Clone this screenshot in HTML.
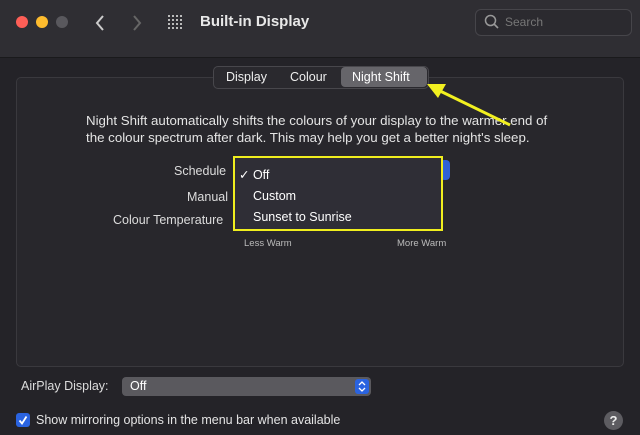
<!DOCTYPE html><html><head><style>
body{margin:0;width:640px;height:435px;background:#242328;font-family:"Liberation Sans",sans-serif;color:#dcdcdc;position:relative;overflow:hidden}
.a{position:absolute}
.tb{left:0;top:0;width:640px;height:57px;background:#2f2e33;border-bottom:1px solid #1a1a1c}
.dot{width:12px;height:12px;border-radius:50%;top:16px}
</style></head><body>
<div class="a tb"></div>
<div class="a dot" style="left:16px;background:#fe5f57"></div>
<div class="a dot" style="left:36px;background:#febc2e"></div>
<div class="a dot" style="left:56px;background:#59585d"></div>
<svg class="a" style="left:92px;top:12px" width="60" height="22"><path d="M11 4 L5 11 L11 18" stroke="#ccc" stroke-width="2" fill="none"/><path d="M42 4 L48 11 L42 18" stroke="#666" stroke-width="2" fill="none"/></svg>
<svg class="a" style="left:168px;top:15px" width="18" height="16" fill="#bbb"><g id="r"><rect x="0" y="0" width="2" height="2"/><rect x="4" y="0" width="2" height="2"/><rect x="8" y="0" width="2" height="2"/><rect x="12" y="0" width="2" height="2"/></g><use href="#r" y="4"/><use href="#r" y="8"/><use href="#r" y="12"/></svg>
<div class="a" style="left:200px;top:13px;font-size:15px;font-weight:bold;color:#e8e8e8">Built-in Display</div>
<div class="a" style="left:475px;top:9px;width:155px;height:25px;border:1px solid #46454a;border-radius:6px;background:#2b2a2f"></div>
<svg class="a" style="left:484px;top:14px" width="16" height="16"><circle cx="6.5" cy="6.5" r="5" stroke="#999" stroke-width="1.5" fill="none"/><path d="M10 10 L14 14" stroke="#999" stroke-width="1.6"/></svg>
<div class="a" style="left:505px;top:15px;font-size:12px;color:#777">Search</div>
<div class="a" style="left:16px;top:77px;width:606px;height:288px;border:1px solid #3a393e;border-radius:5px;background:#28272c"></div>
<div class="a" style="left:213px;top:66px;width:214px;height:21px;border:1px solid #48474c;border-radius:5px;background:#2a292e"></div>
<div class="a" style="left:341px;top:67px;width:86px;height:20px;border-radius:4px;background:#66656a"></div>
<div class="a" style="left:226px;top:70px;font-size:12.5px;color:#eee">Display</div>
<div class="a" style="left:290px;top:70px;font-size:12.5px;color:#eee">Colour</div>
<div class="a" style="left:352px;top:70px;font-size:12.5px;color:#fff">Night Shift</div>
<div class="a" style="left:86px;top:112px;font-size:13.3px;line-height:17px;color:#e4e4e4;white-space:nowrap">Night Shift automatically shifts the colours of your display to the warmer end of<br>the colour spectrum after dark. This may help you get a better night's sleep.</div>
<svg class="a" style="left:0;top:0" width="640" height="435"><path d="M510 125 L436 89" stroke="#f2f020" stroke-width="3"/><path d="M427 84 L446 84 L438 98 Z" fill="#f2f020"/></svg>
<div class="a" style="left:174px;top:164px;font-size:12.5px">Schedule</div>
<div class="a" style="left:187px;top:190px;font-size:12.5px">Manual</div>
<div class="a" style="left:113px;top:213px;font-size:12.5px">Colour Temperature</div>
<div class="a" style="left:244px;top:238px;font-size:9.5px;color:#bbb">Less Warm</div>
<div class="a" style="left:397px;top:238px;font-size:9.5px;color:#bbb">More Warm</div>
<div class="a" style="left:440px;top:160px;width:10px;height:20px;background:#2e62d6;border-radius:4px"></div>
<div class="a" style="left:233px;top:156px;width:206px;height:71px;border:2px solid #f0ee1e;background:#2f2e36"></div>
<div class="a" style="left:239px;top:167px;font-size:12.5px;color:#fff">✓ Off</div>
<div class="a" style="left:253px;top:189px;font-size:12.5px;color:#fff">Custom</div>
<div class="a" style="left:253px;top:210px;font-size:12.5px;color:#fff">Sunset to Sunrise</div>
<div class="a" style="left:21px;top:379px;font-size:12.5px">AirPlay Display:</div>
<div class="a" style="left:122px;top:377px;width:249px;height:19px;border-radius:4px;background:#5a595e"></div>
<div class="a" style="left:130px;top:379px;font-size:12.5px;color:#fff">Off</div>
<div class="a" style="left:355px;top:379px;width:14px;height:15px;border-radius:3px;background:#2a63e0"></div>
<svg class="a" style="left:355px;top:379px" width="14" height="15"><path d="M4 6 L7 3 L10 6 M4 9 L7 12 L10 9" stroke="#fff" stroke-width="1.3" fill="none"/></svg>
<div class="a" style="left:16px;top:413px;width:14px;height:14px;border-radius:3px;background:#2a63e0"></div>
<svg class="a" style="left:16px;top:413px" width="14" height="14"><path d="M3.5 7.5 L6 10.5 L10.5 3.5" stroke="#fff" stroke-width="1.8" fill="none"/></svg>
<div class="a" style="left:36px;top:413px;font-size:12.5px;color:#e4e4e4">Show mirroring options in the menu bar when available</div>
<div class="a" style="left:604px;top:411px;width:19px;height:19px;border-radius:50%;background:#5d5c61;color:#eee;font-size:13px;font-weight:bold;text-align:center;line-height:19px">?</div>
</body></html>
